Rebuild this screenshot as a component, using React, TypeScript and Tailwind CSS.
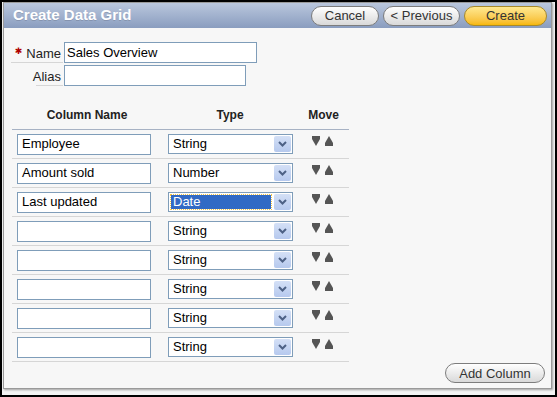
import React from 'react';

const rows = [
  { name: 'Employee', type: 'String' },
  { name: 'Amount sold', type: 'Number' },
  { name: 'Last updated', type: 'Date', focus: true },
  { name: '', type: 'String' },
  { name: '', type: 'String' },
  { name: '', type: 'String' },
  { name: '', type: 'String' },
  { name: '', type: 'String' },
];

const PillButton = ({ label, className = '' }: { label: string; className?: string }) => (
  <div
    className={`h-[20px] flex items-center justify-center rounded-full border border-[#7d7d7d] text-[13px] text-[#333] leading-none ${className}`}
  >
    {label}
  </div>
);

const Select = ({ value, focus }: { value: string; focus?: boolean }) => (
  <div className="w-[125px] h-[20px] border border-[#7f9db9] bg-white flex items-stretch">
    <div className="flex-1 flex items-center p-[2px]">
      <div
        className={`h-full w-full flex items-center pl-[2px] text-[13px] ${
          focus ? 'bg-[#316ac5] text-white outline-1 outline-dotted outline-[#f5c542]' : 'text-black'
        }`}
      >
        {value}
      </div>
    </div>
    <div className="w-[17px] m-[1px] bg-gradient-to-b from-[#d4e0f6] to-[#b6c9ee] rounded-[2px] flex items-center justify-center">
      <svg width="9" height="6" viewBox="0 0 9 6">
        <path d="M1 1 L4.5 4.5 L8 1" stroke="#4d6185" strokeWidth="2" fill="none" />
      </svg>
    </div>
  </div>
);

const MoveArrows = () => (
  <div className="flex items-center gap-[5px]">
    <svg width="8" height="10" viewBox="0 0 8 10">
      <path d="M0 0 H8 V3 L4 10 L0 3 Z" fill="#555" />
    </svg>
    <svg width="8" height="10" viewBox="0 0 8 10">
      <path d="M4 0 L8 7 V10 H0 V7 Z" fill="#555" />
    </svg>
  </div>
);

export default function App() {
  return (
    <div
      className="w-[557px] h-[397px] border-2 border-black bg-[#f3f3f3] overflow-hidden"
      style={{ fontFamily: '"Liberation Sans", Arial, sans-serif' }}
    >
      <div className="mr-[3px] ml-[1px] h-[387px] border border-[#9a9a9a] bg-[#f7f7f7] shadow-[1px_1px_2px_rgba(0,0,0,0.35)] flex flex-col">
        {/* Header */}
        <div className="h-[25px] bg-gradient-to-b from-[#bac7dd] to-[#8a9dbf] flex items-center justify-between pl-[9px] pr-[4px]">
          <span className="text-white font-bold text-[15px] [text-shadow:0_1px_0_rgba(0,0,0,0.15)]">
            Create Data Grid
          </span>
          <div className="flex items-center gap-[4px]">
            <PillButton label="Cancel" className="w-[68px] bg-gradient-to-b from-white to-[#d9d9d9]" />
            <PillButton label="< Previous" className="w-[77px] bg-gradient-to-b from-white to-[#d9d9d9]" />
            <PillButton
              label="Create"
              className="w-[83px] border-[#a88a2a] bg-gradient-to-b from-[#ffe98e] to-[#f6b800]"
            />
          </div>
        </div>

        {/* Name / Alias */}
        <div className="pt-[14px] pl-[7px] flex flex-col gap-[2px]">
          <div className="flex items-center">
            <div className="w-[52px] h-[21px] flex items-end justify-end border-b border-[#d6d6d6] pr-[2px] text-[13px] text-[#222]">
              <span
                className="text-[#b00000] text-[9px] mr-[4px] mb-[6px] leading-none"
                style={{ fontFamily: '"DejaVu Sans", sans-serif' }}
              >
                ✱
              </span>
              <span className="leading-[17px]">Name</span>
            </div>
            <div className="ml-[1px] w-[193px] h-[21px] border border-[#7f9db9] bg-white text-[13px] pl-[2px] flex items-center">
              Sales Overview
            </div>
          </div>
          <div className="flex items-center">
            <div className="ml-[25px] w-[27px] h-[21px] flex items-end justify-end border-b border-[#d6d6d6] pr-[2px] text-[13px] text-[#222]">
              <span className="leading-[17px]">Alias</span>
            </div>
            <div className="ml-[1px] w-[182px] h-[21px] border border-[#7f9db9] bg-white" />
          </div>
        </div>

        {/* Table */}
        <div className="mt-[19px] ml-[8px] w-[337px]">
          <div className="h-[25px] pb-[4px] flex items-center border-b border-[#a7b2c4] text-[12px] font-bold text-[#222]">
            <div className="w-[150px] text-center">Column Name</div>
            <div className="w-[136px] text-center">Type</div>
            <div className="flex-1 text-center">Move</div>
          </div>
          {rows.map((r, i) => (
            <div key={i} className="h-[29px] flex items-center border-b border-[#d6d6d6]">
              <div className="ml-[5px] w-[134px] h-[21px] border border-[#7f9db9] bg-white text-[13px] pl-[4px] flex items-center">
                {r.name}
              </div>
              <div className="ml-[17px]">
                <Select value={r.type} focus={r.focus} />
              </div>
              <div className="ml-[19px] -mt-[6px]">
                <MoveArrows />
              </div>
            </div>
          ))}
        </div>

        <div className="flex justify-end pr-[6px] mt-[1px]">
          <PillButton label="Add Column" className="w-[100px] bg-gradient-to-b from-white to-[#d9d9d9]" />
        </div>
      </div>
    </div>
  );
}
